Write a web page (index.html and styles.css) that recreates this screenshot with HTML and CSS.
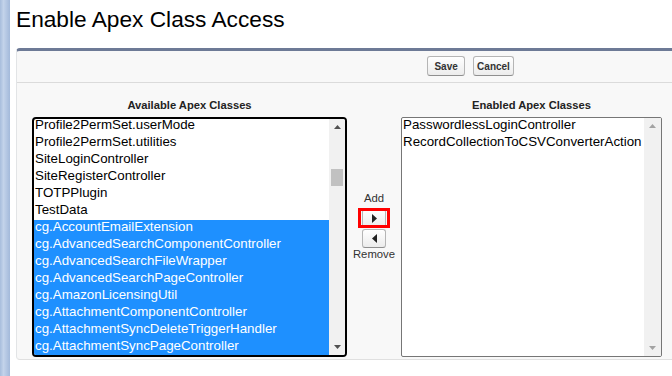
FILE: index.html
```html
<!DOCTYPE html>
<html>
<head>
<meta charset="utf-8">
<link rel="stylesheet" href="styles.css">
</head>
<body>
<div class="page">
  <div class="side"></div>
  <div class="main">
    <h1 class="title">Enable Apex Class Access</h1>
    <div class="panel">
      <div class="panel-head">
        <button class="btn">Save</button>
        <button class="btn">Cancel</button>
      </div>
      <div class="panel-body">
        <div class="dual">
          <div class="col-label">Available Apex Classes</div>
          <div class="mover">
            <div class="mover-label">Add</div>
            <div class="highlight">
              <button class="arrow-btn"><svg width="5" height="9" viewBox="0 0 5 9"><path d="M0 0 L5 4.5 L0 9 Z" fill="#222"/></svg></button>
            </div>
            <button class="arrow-btn"><svg width="5" height="9" viewBox="0 0 5 9"><path d="M5 0 L0 4.5 L5 9 Z" fill="#222"/></svg></button>
            <div class="mover-label">Remove</div>
          </div>
          <div class="col-label">Enabled Apex Classes</div>

          <div class="listbox focused">
            <div class="items shifted">
              <div class="opt">Profile2PermSet.userMode</div>
              <div class="opt">Profile2PermSet.utilities</div>
              <div class="opt">SiteLoginController</div>
              <div class="opt">SiteRegisterController</div>
              <div class="opt">TOTPPlugin</div>
              <div class="opt">TestData</div>
              <div class="opt sel">cg.AccountEmailExtension</div>
              <div class="opt sel">cg.AdvancedSearchComponentController</div>
              <div class="opt sel">cg.AdvancedSearchFileWrapper</div>
              <div class="opt sel">cg.AdvancedSearchPageController</div>
              <div class="opt sel">cg.AmazonLicensingUtil</div>
              <div class="opt sel">cg.AttachmentComponentController</div>
              <div class="opt sel">cg.AttachmentSyncDeleteTriggerHandler</div>
              <div class="opt sel">cg.AttachmentSyncPageController</div>
            </div>
            <div class="scrollbar narrow">
              <div class="sb-arrow"><svg width="7" height="4" viewBox="0 0 7 4"><path d="M0 4 L3.5 0 L7 4 Z" fill="#505050"/></svg></div>
              <div class="sb-track"><div class="sb-thumb"></div></div>
              <div class="sb-arrow"><svg width="7" height="4" viewBox="0 0 7 4"><path d="M0 0 L3.5 4 L7 0 Z" fill="#505050"/></svg></div>
            </div>
          </div>

          <div class="listbox">
            <div class="items">
              <div class="opt">PasswordlessLoginController</div>
              <div class="opt">RecordCollectionToCSVConverterAction</div>
            </div>
            <div class="scrollbar">
              <div class="sb-arrow"><svg width="7" height="4" viewBox="0 0 7 4"><path d="M0 4 L3.5 0 L7 4 Z" fill="#a3a3a3"/></svg></div>
              <div class="sb-track"></div>
              <div class="sb-arrow"><svg width="7" height="4" viewBox="0 0 7 4"><path d="M0 0 L3.5 4 L7 0 Z" fill="#a3a3a3"/></svg></div>
            </div>
          </div>
        </div>
      </div>
    </div>
  </div>
</div>
</body>
</html>
```

FILE: styles.css
```css
html, body {
  margin: 0;
  padding: 0;
  overflow: hidden;
  background: #fff;
}

body {
  font-family: "Liberation Sans", Arial, sans-serif;
  color: #222;
}

.page {
  display: flex;
  width: 672px;
  height: 376px;
  overflow: hidden;
}

.side {
  flex: 0 0 10px;
  background: linear-gradient(90deg, #a7bddc 0%, #c3d3ea 35%, #b4c7e3 65%, #a3b9da 100%);
}

.main {
  flex: 1 0 auto;
  padding-left: 6px;
}

.title {
  margin: 4px 0 0 0;
  font-size: 22.7px;
  line-height: 30px;
  font-weight: normal;
  color: #000;
}

.panel {
  width: 907px;
  margin-top: 14px;
  background: #f8f8f8;
  border-top: 3px solid #6d7a96;
  border-left: 1px solid #e2e4e6;
  border-bottom: 1px solid #e0e0e0;
  border-radius: 4px 0 0 4px;
}

.panel-head {
  display: flex;
  justify-content: center;
  gap: 8px;
  padding: 5px 0 6px;
  border-bottom: 1px solid #dbdbdb;
}

.btn {
  box-sizing: border-box;
  height: 20px;
  min-width: 38px;
  padding: 0 3px;
  font-family: "Liberation Sans", Arial, sans-serif;
  font-size: 10px;
  font-weight: bold;
  color: #333;
  background: linear-gradient(#ffffff, #ececec);
  border: 1px solid #b5b5b5;
  border-bottom-color: #8f8f8f;
  border-radius: 3px;
}

.panel-body {
  padding: 15px 0 2px 15px;
}

.dual {
  display: grid;
  grid-template-columns: 315px 54px 261px;
  grid-template-rows: 14px 240px;
  row-gap: 5px;
}

.col-label {
  font-size: 11.2px;
  line-height: 14px;
  font-weight: bold;
  color: #222;
  text-align: center;
}

.mover {
  grid-column: 2;
  grid-row: 1 / span 2;
  align-self: center;
  display: flex;
  flex-direction: column;
  align-items: center;
  margin-top: -3px;
}

.mover-label {
  font-size: 11.3px;
  line-height: 13px;
  color: #333;
}

.mover-label:first-child {
  margin-bottom: 4px;
}

.highlight {
  position: relative;
  margin-bottom: 1px;
}

.highlight::after {
  content: "";
  position: absolute;
  left: -4px;
  right: -4px;
  top: -1px;
  bottom: 0;
  border: 3px solid #ff0000;
}

.arrow-btn {
  box-sizing: border-box;
  width: 24px;
  height: 19px;
  padding: 0;
  display: flex;
  align-items: center;
  justify-content: center;
  background: linear-gradient(#ffffff, #ececec);
  border: 1px solid #b5b5b5;
  border-bottom-color: #8f8f8f;
  border-radius: 3px;
}

.listbox {
  box-sizing: border-box;
  height: 240px;
  display: flex;
  background: #fff;
  border: 1px solid #767676;
  border-radius: 2px;
  overflow: hidden;
}

.listbox.focused {
  border: 2px solid #000;
  border-radius: 4px;
}

.items {
  flex: 1;
  overflow: hidden;
}

.items.shifted {
  margin-top: -1px;
}

.opt {
  height: 17px;
  line-height: 14px;
  padding-left: 1px;
  font-size: 13.33px;
  color: #000;
  white-space: nowrap;
}

.opt.sel {
  background: #1e90ff;
  color: #fff;
}

.scrollbar {
  flex: 0 0 17px;
  display: flex;
  flex-direction: column;
  background: #f1f1f1;
}

.scrollbar.narrow {
  flex-basis: 16px;
}

.sb-arrow {
  height: 16px;
  display: flex;
  align-items: center;
  justify-content: center;
}

.sb-track {
  flex: 1;
  padding: 34px 2px 0;
}

.sb-thumb {
  height: 17px;
  background: #c1c1c1;
}
```
